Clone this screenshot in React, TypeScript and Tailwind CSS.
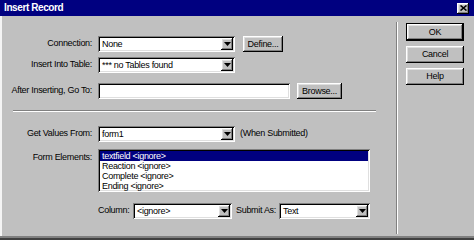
import React from "react";

const sunken =
  "shadow-[inset_1px_1px_0_#808080,inset_-1px_-1px_0_#ffffff,inset_2px_2px_0_#000000,inset_-2px_-2px_0_#dfdfdf]";
const raised =
  "shadow-[inset_-1px_-1px_0_#000000,inset_1px_1px_0_#ffffff,inset_-2px_-2px_0_#808080,inset_2px_2px_0_#dfdfdf]";

function Arrow() {
  return (
    <div className={`w-[12px] h-full bg-[#c0c0c0] flex items-center justify-center ${raised}`}>
      <svg width="7" height="4" viewBox="0 0 7 4">
        <path d="M0 0H7L3.5 4Z" fill="#000" />
      </svg>
    </div>
  );
}

function Select({ className, value }: { className: string; value: string }) {
  return (
    <div className={`h-[16px] bg-white flex items-stretch p-[2px] ${sunken} ${className}`}>
      <div className="flex-1 pl-[2px] leading-[12px] whitespace-nowrap overflow-hidden">{value}</div>
      <Arrow />
    </div>
  );
}

function Button({ className, children }: { className: string; children: React.ReactNode }) {
  return (
    <div className={`bg-[#c0c0c0] flex items-center justify-center leading-none ${raised} ${className}`}>
      {children}
    </div>
  );
}

function Label({ children }: { children: React.ReactNode }) {
  return <div className="w-[90px] text-right whitespace-nowrap">{children}</div>;
}

export default function App() {
  return (
    <div className="w-[474px] h-[240px] bg-[#c0c0c0] flex flex-col overflow-hidden text-[9px] tracking-[-0.3px] text-black font-['Liberation_Sans',Arial,sans-serif]">
      <div className="h-[16px] shrink-0 bg-[#000080] flex items-center justify-between pl-[4px] pr-[5px]">
        <span className="text-white font-bold text-[10px] tracking-[-0.4px] leading-none">Insert Record</span>
        <div className={`w-[12px] h-[11px] bg-[#c0c0c0] flex items-center justify-center ${raised}`}>
          <svg width="7" height="6" viewBox="0 0 7 6">
            <path d="M0.5 0.5L6.5 5.5M6.5 0.5L0.5 5.5" stroke="#000" strokeWidth="1.6" />
          </svg>
        </div>
      </div>
      <div className="flex-1 flex border-l-2 border-l-[#f4f4f4]">
        <div className="w-[394px] flex flex-col pt-[20px]">
          <div className="flex items-center h-[16px]">
            <Label>Connection:</Label>
            <Select className="ml-[6px] w-[137px]" value="None" />
            <Button className="ml-[8px] w-[40px] h-[16px]">Define...</Button>
          </div>
          <div className="flex items-center h-[16px] mt-[5px]">
            <Label>Insert Into Table:</Label>
            <Select className="ml-[6px] w-[137px]" value="*** no Tables found" />
          </div>
          <div className="flex items-center h-[16px] mt-[10px]">
            <Label>After Inserting, Go To:</Label>
            <div className={`ml-[6px] w-[192px] h-[16px] bg-white ${sunken}`} />
            <Button className="ml-[7px] w-[45px] h-[16px]">Browse...</Button>
          </div>
          <div className="ml-[11px] mt-[11px] w-[363px] h-[2px] border-t border-t-[#808080] border-b border-b-white" />
          <div className="flex items-center h-[16px] mt-[14px]">
            <Label>Get Values From:</Label>
            <Select className="ml-[6px] w-[137px]" value="form1" />
            <span className="ml-[5px] whitespace-nowrap">(When Submitted)</span>
          </div>
          <div className="flex items-start mt-[7px]">
            <div className="pt-[2px]">
              <Label>Form Elements:</Label>
            </div>
            <div className={`ml-[6px] w-[272px] h-[43px] bg-white p-[2px] ${sunken}`}>
              <div className="h-[10px] leading-[10px] bg-[#000080] text-white pl-[2px]">textfield &lt;ignore&gt;</div>
              <div className="h-[10px] leading-[10px] pl-[2px]">Reaction &lt;ignore&gt;</div>
              <div className="h-[10px] leading-[10px] pl-[2px]">Complete &lt;ignore&gt;</div>
              <div className="h-[10px] leading-[10px] pl-[2px]">Ending &lt;ignore&gt;</div>
            </div>
          </div>
          <div className="flex items-center h-[16px] mt-[11px] pl-[96px]">
            <span className="w-[35px] whitespace-nowrap">Column:</span>
            <Select className="w-[99px]" value="<ignore>" />
            <span className="ml-[4px] w-[43px] whitespace-nowrap">Submit As:</span>
            <Select className="w-[91px]" value="Text" />
          </div>
        </div>
        <div className="w-[2px] mt-[6px] mb-[2px] border-l border-l-[#808080] border-r border-r-white" />
        <div className="flex-1 flex flex-col pl-[8px] pt-[7px]">
          <div className="w-[58px] h-[18px] border border-black">
            <Button className="w-full h-full">OK</Button>
          </div>
          <Button className="mt-[5px] w-[58px] h-[17px]">Cancel</Button>
          <Button className="mt-[5px] w-[58px] h-[17px]">Help</Button>
        </div>
      </div>
      <div className="h-[4px] shrink-0 border-t-2 border-t-[#808080] bg-[#404040]" />
    </div>
  );
}
